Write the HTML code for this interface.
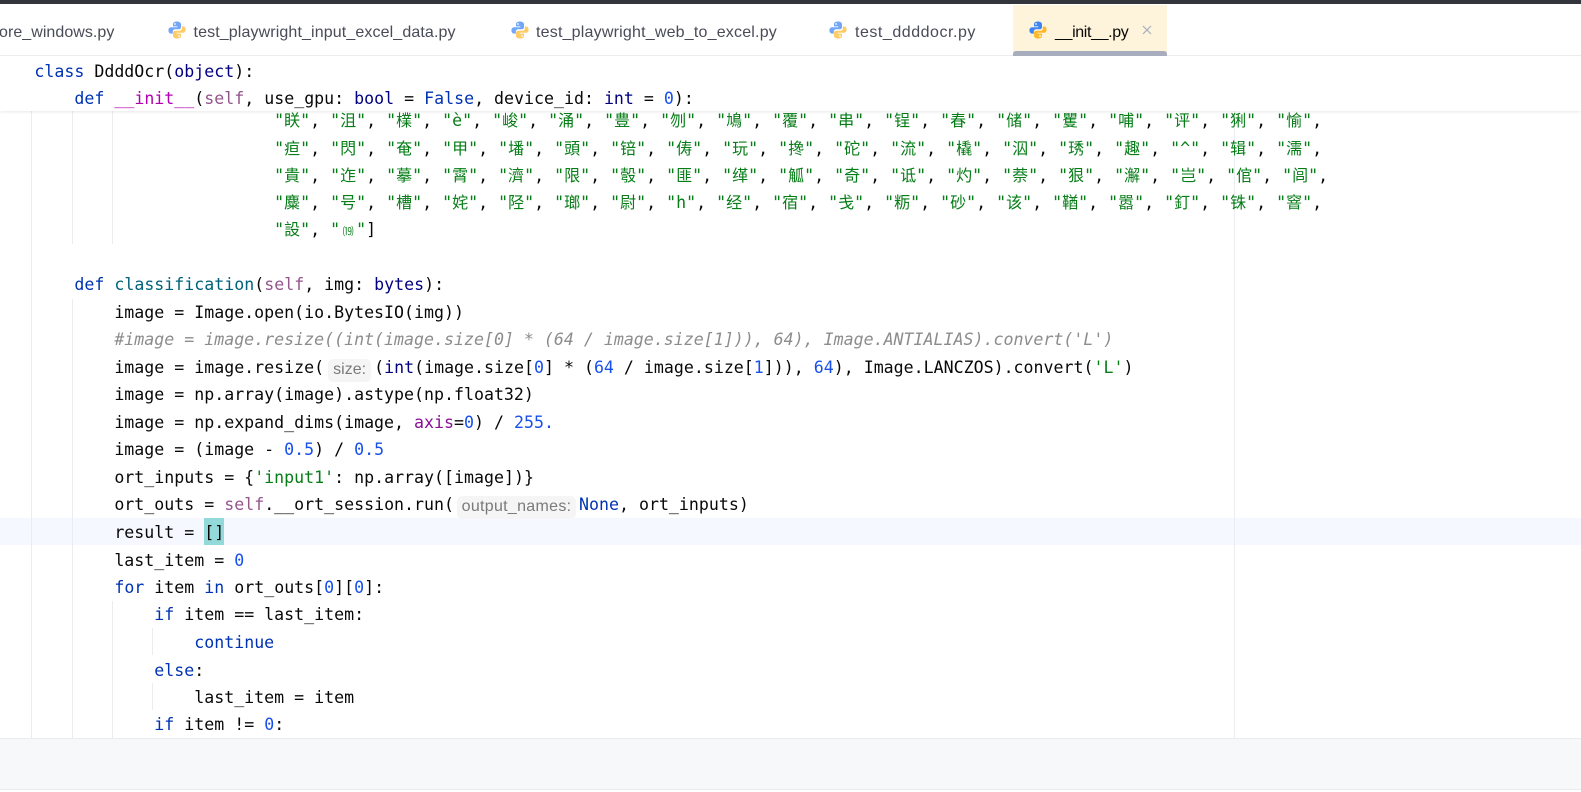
<!DOCTYPE html>
<html><head><meta charset="utf-8"><style>
html,body{margin:0;padding:0;width:1581px;height:792px;overflow:hidden;background:#fff}
*{box-sizing:border-box}
.abs{position:absolute}
.top{position:absolute;left:0;top:0;width:1581px;height:4px;background:#32353b}
.tabs{position:absolute;left:0;top:4px;width:1581px;height:52px;background:#fff;border-bottom:1px solid #ebecf0;z-index:5}
.tab{position:absolute;top:21px;font:16px/24px "Liberation Sans",sans-serif;color:#494b57;white-space:pre}
.ico{position:absolute;top:21px;width:18px;height:18px;z-index:6}
.gl{position:absolute;width:1px;background:#ebecf0}
.r{position:absolute;left:34.4px;height:27px;line-height:27px;font-family:"DejaVu Sans Mono","Liberation Mono",monospace;font-size:16.6px;color:#080808;white-space:pre;z-index:2}
.s{color:#067d17}
.s u{text-decoration:none;font-family:"Noto Sans CJK SC",sans-serif;font-size:16px}
.s b{font-weight:normal;color:#080808}
.k{color:#0033b3}.n{color:#1750eb}.f{color:#94558d}.d{color:#00627a}.m{color:#b200b2}.p{color:#871094}.t{color:#000080}
.c{color:#8c8c8c;font-style:italic}
.h{display:inline-block;height:23px;line-height:22px;vertical-align:-1px;margin-left:4px;margin-right:3px;background:#f5f5f5;border-radius:5px;font:16px/22px "Liberation Sans",sans-serif;color:#7a7a7a;text-align:center}
.sticky{position:absolute;left:0;top:56px;width:1581px;height:55px;background:#fff;box-shadow:0 1px 3px rgba(0,0,0,.09);z-index:4}
.sticky .r{z-index:5}
</style></head><body>
<div class="top"></div>
<div class="tabs"></div>
<div class="abs" style="left:1013px;top:5px;width:154px;height:50px;background:#fef4dc;z-index:6"></div>
<div class="abs" style="left:1013px;top:51px;width:154px;height:5px;background:#a8adbd;border-radius:3px 3px 0 0;z-index:7"></div>
<div class="tab" style="left:-1px;z-index:7;letter-spacing:.05px">ore_windows.py</div>
<div class="tab" style="left:193.5px;z-index:7;letter-spacing:.12px">test_playwright_input_excel_data.py</div>
<div class="tab" style="left:536px;z-index:7;letter-spacing:.2px">test_playwright_web_to_excel.py</div>
<div class="tab" style="left:855px;z-index:7;letter-spacing:.53px">test_ddddocr.py</div>
<div class="tab" style="left:1055px;color:#080808;z-index:7;letter-spacing:-.36px">__init__.py</div>
<svg class="abs" style="left:1142px;top:25px;z-index:7" width="10" height="10" viewBox="0 0 10 10"><path d="M1 1L9 9M9 1L1 9" stroke="#a8adbd" stroke-width="1.2" fill="none"/></svg>

<svg class="ico" style="left:168px;opacity:.72" viewBox="0 0 18 18"><path fill="#3d85f5" d="M9 0.5C6.2 0.5 5 1.6 5 3.4V5.4H9.3V6.2H3.2C1.5 6.2 0.4 7.5 0.4 9.3C0.4 11.2 1.4 12.6 3.1 12.6H4.8V10.6C4.8 9.2 6 8.3 7.3 8.3H10.9C12.1 8.3 13 7.3 13 6.2V3.4C13 1.6 11.4 0.5 9 0.5Z"/><circle cx="7" cy="3" r=".9" fill="#fff"/><path fill="#fdb92d" d="M9 17.5C11.8 17.5 13 16.4 13 14.6V12.6H8.7V11.8H14.8C16.5 11.8 17.6 10.5 17.6 8.7C17.6 6.8 16.6 5.4 14.9 5.4H13.9V7.4C13.9 8.8 12.7 9.7 11.4 9.7H7.1C5.9 9.7 5 10.7 5 11.8V14.6C5 16.4 6.6 17.5 9 17.5Z"/><circle cx="11" cy="15" r=".9" fill="#fff"/></svg>
<svg class="ico" style="left:511px;opacity:.72" viewBox="0 0 18 18"><path fill="#3d85f5" d="M9 0.5C6.2 0.5 5 1.6 5 3.4V5.4H9.3V6.2H3.2C1.5 6.2 0.4 7.5 0.4 9.3C0.4 11.2 1.4 12.6 3.1 12.6H4.8V10.6C4.8 9.2 6 8.3 7.3 8.3H10.9C12.1 8.3 13 7.3 13 6.2V3.4C13 1.6 11.4 0.5 9 0.5Z"/><circle cx="7" cy="3" r=".9" fill="#fff"/><path fill="#fdb92d" d="M9 17.5C11.8 17.5 13 16.4 13 14.6V12.6H8.7V11.8H14.8C16.5 11.8 17.6 10.5 17.6 8.7C17.6 6.8 16.6 5.4 14.9 5.4H13.9V7.4C13.9 8.8 12.7 9.7 11.4 9.7H7.1C5.9 9.7 5 10.7 5 11.8V14.6C5 16.4 6.6 17.5 9 17.5Z"/><circle cx="11" cy="15" r=".9" fill="#fff"/></svg>
<svg class="ico" style="left:829px;opacity:.72" viewBox="0 0 18 18"><path fill="#3d85f5" d="M9 0.5C6.2 0.5 5 1.6 5 3.4V5.4H9.3V6.2H3.2C1.5 6.2 0.4 7.5 0.4 9.3C0.4 11.2 1.4 12.6 3.1 12.6H4.8V10.6C4.8 9.2 6 8.3 7.3 8.3H10.9C12.1 8.3 13 7.3 13 6.2V3.4C13 1.6 11.4 0.5 9 0.5Z"/><circle cx="7" cy="3" r=".9" fill="#fff"/><path fill="#fdb92d" d="M9 17.5C11.8 17.5 13 16.4 13 14.6V12.6H8.7V11.8H14.8C16.5 11.8 17.6 10.5 17.6 8.7C17.6 6.8 16.6 5.4 14.9 5.4H13.9V7.4C13.9 8.8 12.7 9.7 11.4 9.7H7.1C5.9 9.7 5 10.7 5 11.8V14.6C5 16.4 6.6 17.5 9 17.5Z"/><circle cx="11" cy="15" r=".9" fill="#fff"/></svg>
<svg class="ico" style="left:1029px;z-index:8" viewBox="0 0 18 18"><path fill="#3d85f5" d="M9 0.5C6.2 0.5 5 1.6 5 3.4V5.4H9.3V6.2H3.2C1.5 6.2 0.4 7.5 0.4 9.3C0.4 11.2 1.4 12.6 3.1 12.6H4.8V10.6C4.8 9.2 6 8.3 7.3 8.3H10.9C12.1 8.3 13 7.3 13 6.2V3.4C13 1.6 11.4 0.5 9 0.5Z"/><circle cx="7" cy="3" r=".9" fill="#fff"/><path fill="#fdb92d" d="M9 17.5C11.8 17.5 13 16.4 13 14.6V12.6H8.7V11.8H14.8C16.5 11.8 17.6 10.5 17.6 8.7C17.6 6.8 16.6 5.4 14.9 5.4H13.9V7.4C13.9 8.8 12.7 9.7 11.4 9.7H7.1C5.9 9.7 5 10.7 5 11.8V14.6C5 16.4 6.6 17.5 9 17.5Z"/><circle cx="11" cy="15" r=".9" fill="#fff"/></svg>

<div class="sticky">
<div class="r" style="top:2px"><span class="k">class</span> DdddOcr(<span class="t">object</span>):</div>
<div class="r" style="top:29px">    <span class="k">def</span> <span class="m">__init__</span>(<span class="f">self</span>, use_gpu: <span class="t">bool</span> = <span class="k">False</span>, device_id: <span class="t">int</span> = <span class="n">0</span>):</div>
</div>

<div class="abs" style="left:0;top:518px;width:1581px;height:27px;background:#f5f8fe"></div>
<div class="abs" style="left:204px;top:518px;width:20px;height:27px;background:#93d9d9;z-index:1"></div>

<div class="gl" style="left:31px;top:111px;height:627px"></div>
<div class="gl" style="left:72px;top:111px;height:133px"></div>
<div class="gl" style="left:112px;top:111px;height:133px"></div>
<div class="gl" style="left:72px;top:299px;height:439px"></div>
<div class="gl" style="left:112px;top:601px;height:137px"></div>
<div class="gl" style="left:152px;top:628px;height:27px"></div>
<div class="gl" style="left:152px;top:683px;height:27px"></div>
<div class="gl" style="left:1234px;top:111px;height:627px"></div>

<div class="r s" style="top:106px">                        "<u>眹</u>"<b>,</b> "<u>沮</u>"<b>,</b> "<u>檏</u>"<b>,</b> "è"<b>,</b> "<u>峻</u>"<b>,</b> "<u>涌</u>"<b>,</b> "<u>豊</u>"<b>,</b> "<u>刎</u>"<b>,</b> "<u>鳩</u>"<b>,</b> "<u>覆</u>"<b>,</b> "<u>串</u>"<b>,</b> "<u>锃</u>"<b>,</b> "<u>春</u>"<b>,</b> "<u>储</u>"<b>,</b> "<u>矍</u>"<b>,</b> "<u>哺</u>"<b>,</b> "<u>评</u>"<b>,</b> "<u>猁</u>"<b>,</b> "<u>愉</u>"<b>,</b></div>
<div class="r s" style="top:134px">                        "<u>疸</u>"<b>,</b> "<u>閃</u>"<b>,</b> "<u>奄</u>"<b>,</b> "<u>甲</u>"<b>,</b> "<u>墦</u>"<b>,</b> "<u>頭</u>"<b>,</b> "<u>锫</u>"<b>,</b> "<u>俦</u>"<b>,</b> "<u>玩</u>"<b>,</b> "<u>搀</u>"<b>,</b> "<u>砣</u>"<b>,</b> "<u>流</u>"<b>,</b> "<u>橇</u>"<b>,</b> "<u>泅</u>"<b>,</b> "<u>琇</u>"<b>,</b> "<u>趣</u>"<b>,</b> "^"<b>,</b> "<u>辑</u>"<b>,</b> "<u>濡</u>"<b>,</b></div>
<div class="r s" style="top:161px">                        "<u>貴</u>"<b>,</b> "<u>迮</u>"<b>,</b> "<u>摹</u>"<b>,</b> "<u>霄</u>"<b>,</b> "<u>濟</u>"<b>,</b> "<u>限</u>"<b>,</b> "<u>彀</u>"<b>,</b> "<u>匪</u>"<b>,</b> "<u>缂</u>"<b>,</b> "<u>觚</u>"<b>,</b> "<u>奇</u>"<b>,</b> "<u>诋</u>"<b>,</b> "<u>灼</u>"<b>,</b> "<u>萘</u>"<b>,</b> "<u>狠</u>"<b>,</b> "<u>澥</u>"<b>,</b> "<u>岂</u>"<b>,</b> "<u>倌</u>"<b>,</b> "<u>闾</u>"<b>,</b></div>
<div class="r s" style="top:188px">                        "<u>麋</u>"<b>,</b> "<u>号</u>"<b>,</b> "<u>槽</u>"<b>,</b> "<u>姹</u>"<b>,</b> "<u>陉</u>"<b>,</b> "<u>瑯</u>"<b>,</b> "<u>尉</u>"<b>,</b> "h"<b>,</b> "<u>经</u>"<b>,</b> "<u>宿</u>"<b>,</b> "<u>戋</u>"<b>,</b> "<u>粝</u>"<b>,</b> "<u>砂</u>"<b>,</b> "<u>该</u>"<b>,</b> "<u>鞧</u>"<b>,</b> "<u>嚣</u>"<b>,</b> "<u>釘</u>"<b>,</b> "<u>铢</u>"<b>,</b> "<u>窨</u>"<b>,</b></div>
<div class="r s" style="top:215px">                        "<u>設</u>"<b>,</b> "<u style="font-size:11px;display:inline-block;width:16px;text-align:center">⒆</u>"<b>]</b></div>

<div class="r" style="top:271px">    <span class="k">def</span> <span class="d">classification</span>(<span class="f">self</span>, img: <span class="t">bytes</span>):</div>
<div class="r" style="top:299px">        image = Image.open(io.BytesIO(img))</div>
<div class="r c" style="top:326px">        #image = image.resize((int(image.size[0] * (64 / image.size[1])), 64), Image.ANTIALIAS).convert('L')</div>
<div class="r" style="top:354px">        image = image.resize(<span class="h" style="width:43px">size:</span>(<span class="t">int</span>(image.size[<span class="n">0</span>] * (<span class="n">64</span> / image.size[<span class="n">1</span>])), <span class="n">64</span>), Image.LANCZOS).convert(<span class="s">'L'</span>)</div>
<div class="r" style="top:381px">        image = np.array(image).astype(np.float32)</div>
<div class="r" style="top:409px">        image = np.expand_dims(image, <span class="p">axis</span>=<span class="n">0</span>) / <span class="n">255.</span></div>
<div class="r" style="top:436px">        image = (image - <span class="n">0.5</span>) / <span class="n">0.5</span></div>
<div class="r" style="top:464px">        ort_inputs = {<span class="s">'input1'</span>: np.array([image])}</div>
<div class="r" style="top:491px">        ort_outs = <span class="f">self</span>.__ort_session.run(<span class="h" style="width:119px;margin-left:3px;letter-spacing:.3px">output_names:</span><span class="k">None</span>, ort_inputs)</div>
<div class="r" style="top:519px">        result = []</div>
<div class="r" style="top:547px">        last_item = <span class="n">0</span></div>
<div class="r" style="top:574px">        <span class="k">for</span> item <span class="k">in</span> ort_outs[<span class="n">0</span>][<span class="n">0</span>]:</div>
<div class="r" style="top:601px">            <span class="k">if</span> item == last_item:</div>
<div class="r" style="top:629px">                <span class="k">continue</span></div>
<div class="r" style="top:657px">            <span class="k">else</span>:</div>
<div class="r" style="top:684px">                last_item = item</div>
<div class="r" style="top:711px">            <span class="k">if</span> item != <span class="n">0</span>:</div>

<div class="abs" style="left:0;top:738px;width:1581px;height:52px;background:#f7f8fa;border-top:1px solid #ebecf0;border-bottom:1px solid #ebecf0;z-index:3"></div>
</body></html>
